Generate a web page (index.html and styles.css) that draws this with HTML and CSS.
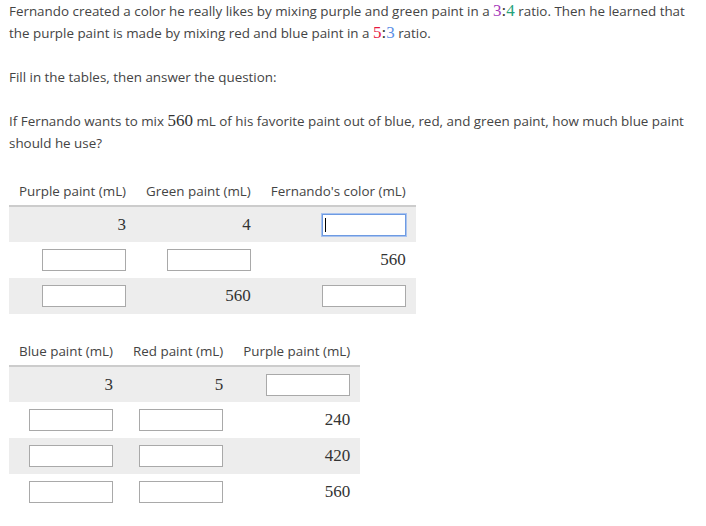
FILE: index.html
```html
<!DOCTYPE html>
<html>
<head>
<meta charset="utf-8">
<link rel="stylesheet" href="styles.css">
</head>
<body>
<div class="page">
  <p class="para">Fernando created a color he really likes by mixing purple and green paint in a <span class="m"><span class="purple">3</span>:<span class="green">4</span></span> ratio. Then he learned that the purple paint is made by mixing red and blue paint in a <span class="m"><span class="red">5</span>:<span class="blue">3</span></span> ratio.</p>
  <p class="para">Fill in the tables, then answer the question:</p>
  <p class="para">If Fernando wants to mix <span class="m">560</span> mL of his favorite paint out of blue, red, and green paint, how much blue paint should he use?</p>

  <table class="ratio t1">
    <thead>
      <tr><th>Purple paint (mL)</th><th>Green paint (mL)</th><th>Fernando's color (mL)</th></tr>
    </thead>
    <tbody>
      <tr><td class="num">3</td><td class="num">4</td><td><span class="focus-wrap"><input class="box focused" type="text"></span></td></tr>
      <tr><td><input class="box" type="text"></td><td><input class="box" type="text"></td><td class="num">560</td></tr>
      <tr><td><input class="box" type="text"></td><td class="num">560</td><td><input class="box" type="text"></td></tr>
    </tbody>
  </table>

  <table class="ratio t2">
    <thead>
      <tr><th>Blue paint (mL)</th><th>Red paint (mL)</th><th>Purple paint (mL)</th></tr>
    </thead>
    <tbody>
      <tr><td class="num">3</td><td class="num">5</td><td><input class="box" type="text"></td></tr>
      <tr><td><input class="box" type="text"></td><td><input class="box" type="text"></td><td class="num">240</td></tr>
      <tr><td><input class="box" type="text"></td><td><input class="box" type="text"></td><td class="num">420</td></tr>
      <tr><td><input class="box" type="text"></td><td><input class="box" type="text"></td><td class="num">560</td></tr>
    </tbody>
  </table>
</div>
</body>
</html>
```

FILE: styles.css
```css
html, body {
  margin: 0;
  padding: 0;
  background: #fff;
}
body {
  font-family: "Open Sans", "Lato", sans-serif;
  font-size: 13.4px;
  color: #444;
}
.page {
  padding: 0 9px;
}
.para {
  margin: 0 0 22px 0;
  line-height: 22px;
}
.m {
  font-family: "Liberation Serif", "DejaVu Serif", serif;
  font-size: 17px;
  line-height: 1;
  color: #333;
}
.purple { color: #a83dbd; }
.green { color: #26a37a; }
.red { color: #e8173f; }
.blue { color: #5d8fe6; }

.ratio {
  border-collapse: collapse;
  margin-top: 24px;
}
.ratio th {
  font-weight: normal;
  line-height: 18px;
  padding: 4px 10px 5px;
  border-bottom: 2px solid #ccc;
  text-align: left;
  white-space: nowrap;
  color: #444;
}
.ratio td {
  height: 36px;
  padding: 0 10px;
  box-sizing: border-box;
  text-align: right;
  vertical-align: middle;
}
.ratio tbody tr:nth-child(odd) {
  background: #ededed;
}
.num {
  font-family: "Liberation Serif", "DejaVu Serif", serif;
  font-size: 17px;
  color: #333;
}
.box {
  width: 84px;
  height: 22px;
  box-sizing: border-box;
  border: 1px solid #a9a9a9;
  background: #fff;
  margin: 0;
  padding: 0;
  display: block;
  margin-left: auto;
  outline: none;
}
.focus-wrap {
  position: relative;
  display: block;
}
.box.focused {
  border: 1px solid #6e9be2;
  box-shadow: 0 0 0 1px #a9c3ef;
}
.focus-wrap::after {
  content: "";
  position: absolute;
  right: 80px;
  top: 4px;
  width: 1px;
  height: 14px;
  background: #000;
}
```
